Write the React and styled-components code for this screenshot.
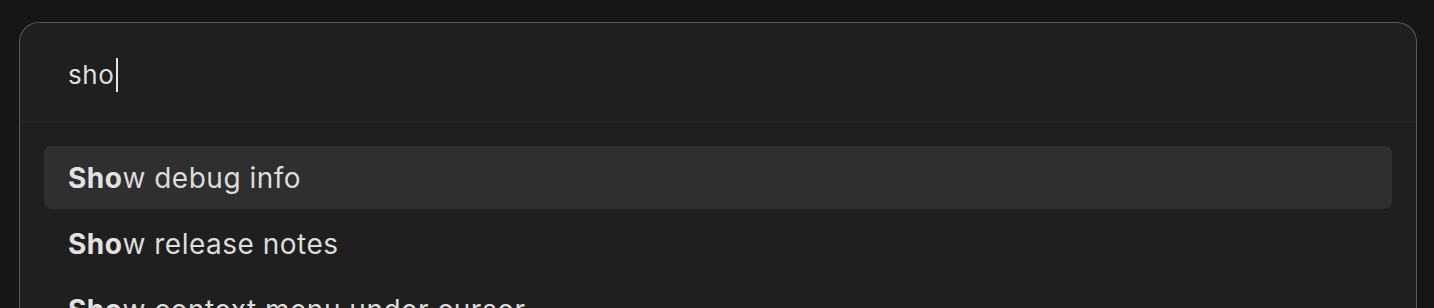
import React from "react"
import styled, { createGlobalStyle } from "styled-components"

const Global = createGlobalStyle`
  html, body {
    margin: 0;
    padding: 0;
    background: #161616;
    font-family: Inter, "Noto Sans", sans-serif;
    overflow: hidden;
  }
`

const Page = styled.div`
  padding: 22px 17px 0 19px;
  height: 308px;
  box-sizing: border-box;
`

const Modal = styled.div`
  background: #1f1f1f;
  border: 1px solid #5a5a5a;
  border-bottom: none;
  border-radius: 20px 20px 0 0;
  height: 300px;
  box-sizing: border-box;
  overflow: hidden;
`

const Header = styled.div`
  height: 98px;
  border-bottom: 1px solid #2a2a2a;
  display: flex;
  align-items: center;
  padding: 0 48px;
`

const Query = styled.div`
  font-size: 26px;
  letter-spacing: 0.6px;
  color: #dedede;
  display: flex;
  align-items: center;
  margin-top: 5px;
`

const Caret = styled.span`
  display: inline-block;
  width: 2px;
  height: 34px;
  background: #e6e6e6;
  margin-left: 1px;
`

const List = styled.ul`
  list-style: none;
  margin: 0;
  padding: 24px 24px 0;
  display: flex;
  flex-direction: column;
  gap: 3px;
`

const Item = styled.li`
  height: 63px;
  border-radius: 7px;
  background: ${(p) => (p.$active ? "#2f2f2f" : "transparent")};
  display: flex;
  align-items: center;
  padding: 0 24px;
  font-size: 28px;
  letter-spacing: 0.5px;
  color: #dcdcdc;
  white-space: nowrap;
  strong {
    font-weight: 700;
    color: #e2e2e2;
  }
`

const items = [
  "Show debug info",
  "Show release notes",
  "Show context menu under cursor",
]

const query = "sho"

const App = () => {
  return (
    <Page>
      <Global />
      <Modal>
        <Header>
          <Query>
            {query}
            <Caret />
          </Query>
        </Header>
        <List>
          {items.map((text, i) => (
            <Item key={text} $active={i === 0}>
              <strong>{text.slice(0, query.length)}</strong>
              {text.slice(query.length)}
            </Item>
          ))}
        </List>
      </Modal>
    </Page>
  )
}

export default App
